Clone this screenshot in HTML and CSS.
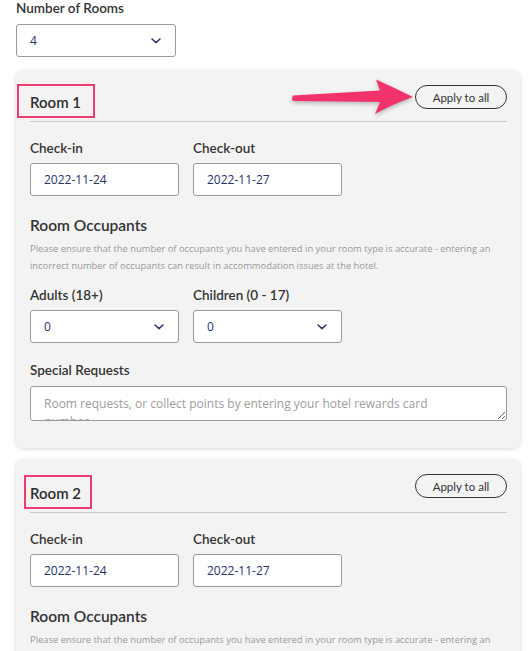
FILE: index.html
```html
<!DOCTYPE html>
<html lang="en">
<head>
<meta charset="utf-8">
<title>Rooms</title>
<link rel="stylesheet" href="styles.css">
</head>
<body>
<div class="page">
  <div class="field-label">Number of Rooms</div>
  <div class="select select-rooms">
    <span class="value">4</span>
    <svg class="chev" width="10" height="6" viewBox="0 0 10 6"><path d="M1 1l4 3.6L9 1" fill="none" stroke="#27336b" stroke-width="1.5" stroke-linecap="round" stroke-linejoin="round"/></svg>
  </div>

  <section class="card card-first">
    <svg class="arrow" width="140" height="60" viewBox="0 0 140 60"><path d="M13 25.5L100 20.5L96 9.5Q115 18 133 27Q113 34 95 44L100 32L13 31Q11 28.3 13 25.5Z" fill="#f2336b"/></svg>
    <div class="card-head">
      <div class="room-title title-1">Room 1</div>
      <button class="apply">Apply to all</button>
    </div>
    <div class="divider"></div>
    <div class="row">
      <div class="col">
        <div class="field-label">Check-in</div>
        <div class="input">2022-11-24</div>
      </div>
      <div class="col">
        <div class="field-label">Check-out</div>
        <div class="input">2022-11-27</div>
      </div>
    </div>
    <h3 class="section-title">Room Occupants</h3>
    <p class="desc">Please ensure that the number of occupants you have entered in your room type is accurate - entering an incorrect number of occupants can result in accommodation issues at the hotel.</p>
    <div class="row row-occ">
      <div class="col">
        <div class="field-label">Adults (18+)</div>
        <div class="select">
          <span class="value">0</span>
          <svg class="chev" width="10" height="6" viewBox="0 0 10 6"><path d="M1 1l4 3.6L9 1" fill="none" stroke="#27336b" stroke-width="1.5" stroke-linecap="round" stroke-linejoin="round"/></svg>
        </div>
      </div>
      <div class="col">
        <div class="field-label">Children (0 - 17)</div>
        <div class="select">
          <span class="value">0</span>
          <svg class="chev" width="10" height="6" viewBox="0 0 10 6"><path d="M1 1l4 3.6L9 1" fill="none" stroke="#27336b" stroke-width="1.5" stroke-linecap="round" stroke-linejoin="round"/></svg>
        </div>
      </div>
    </div>
    <div class="field-label label-special">Special Requests</div>
    <textarea class="requests" placeholder="Room requests, or collect points by entering your hotel rewards card number"></textarea>
  </section>

  <section class="card card-second">
    <div class="card-head">
      <div class="room-title title-2">Room 2</div>
      <button class="apply">Apply to all</button>
    </div>
    <div class="divider"></div>
    <div class="row">
      <div class="col">
        <div class="field-label">Check-in</div>
        <div class="input">2022-11-24</div>
      </div>
      <div class="col">
        <div class="field-label">Check-out</div>
        <div class="input">2022-11-27</div>
      </div>
    </div>
    <h3 class="section-title">Room Occupants</h3>
    <p class="desc">Please ensure that the number of occupants you have entered in your room type is accurate - entering an incorrect number of occupants can result in accommodation issues at the hotel.</p>
  </section>
</div>
</body>
</html>
```

FILE: styles.css
```css
* { box-sizing: border-box; }
html, body { margin: 0; padding: 0; background: #ffffff; }
body {
  font-family: "Lato", "Noto Sans", sans-serif;
  color: #333333;
  overflow: hidden;
  height: 651px;
}
.page {
  padding: 0 11px 0 16px;
}
.field-label {
  font-family: "Lato", sans-serif;
  font-weight: 600;
  font-size: 13.5px;
  line-height: 16px;
  color: #333333;
}
.select, .input {
  display: flex;
  align-items: center;
  justify-content: space-between;
  background: #ffffff;
  border: 1px solid #9a9a9a;
  border-radius: 3px;
  height: 33px;
  padding: 0 14px 0 13px;
  font-family: "Open Sans", sans-serif;
  font-size: 12px;
  color: #27336b;
  margin-top: 7px;
}
.select-rooms {
  width: 160px;
  margin-top: 8px;
}
.chev { display: block; }
.card {
  position: relative;
  background: #f3f3f3;
  border-radius: 7px;
  box-shadow: 0 1px 4px rgba(0, 0, 0, 0.16);
  padding: 14px 13px 27px 14px;
}
.card-first { margin-top: 13px; }
.card-second { margin-top: 11px; padding-top: 16px; }
.arrow {
  position: absolute;
  left: 264px;
  top: 0;
  filter: drop-shadow(0 2px 2px rgba(0, 0, 0, 0.25));
}
.card-head {
  display: flex;
  justify-content: space-between;
  align-items: flex-start;
}
.room-title {
  border: 2px solid #ec3b6f;
  height: 34px;
  display: flex;
  align-items: center;
  font-family: "Lato", sans-serif;
  font-weight: 600;
  font-size: 15px;
  color: #2e2e2e;
}
.title-1 { margin-left: -13px; padding: 1px 12px 0 11px; }
.title-2 { margin-left: -6px; padding: 1px 9px 0 4px; }
.apply {
  font-family: "Lato", sans-serif;
  font-size: 11.5px;
  color: #333333;
  background: transparent;
  border: 1px solid #333333;
  border-radius: 13px;
  width: 92px;
  height: 24px;
  padding: 0;
  margin-top: 1px;
}
.card-second .apply { margin-top: -1px; }
.divider {
  height: 1px;
  background: #c9c9c9;
  margin-top: 3px;
}
.row {
  display: flex;
  gap: 14px;
  margin-top: 18px;
}
.col { width: 149px; }
.section-title {
  margin: 19px 0 0;
  font-family: "Lato", sans-serif;
  font-weight: 600;
  font-size: 15.5px;
  line-height: 20px;
  color: #333333;
}
.desc {
  margin: 5px 0 0;
  font-family: "Open Sans", sans-serif;
  font-size: 9.4px;
  line-height: 17px;
  color: #9a9a9a;
}
.row-occ { margin-top: 13px; }
.label-special { margin-top: 19px; }
.requests {
  display: block;
  width: 477px;
  height: 35px;
  margin-top: 8px;
  border: 1px solid #9a9a9a;
  border-radius: 3px;
  background: #ffffff;
  padding: 8px 34px 0 13px;
  font-family: "Open Sans", sans-serif;
  font-size: 12px;
  line-height: 18px;
  overflow: hidden;
  resize: both;
}
.requests::placeholder { color: #9d9d9d; }
```
